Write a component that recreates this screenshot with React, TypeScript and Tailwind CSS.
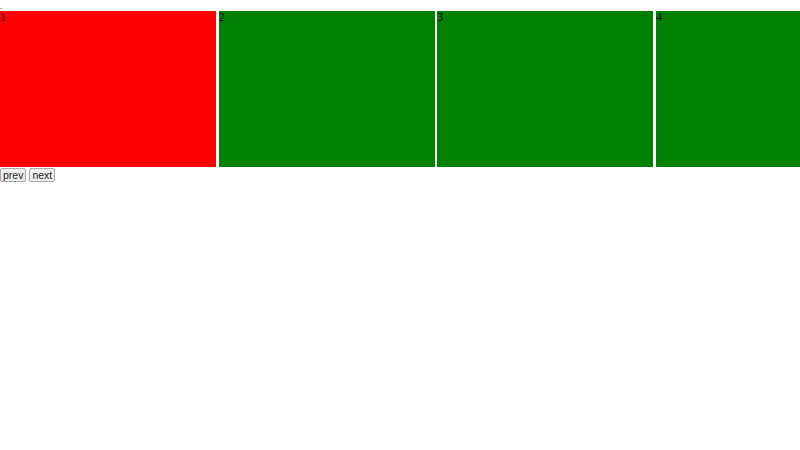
const slides = [
  { n: 1, color: 'bg-[#ff0000]' },
  { n: 2, color: 'bg-[#008000]' },
  { n: 3, color: 'bg-[#008000]' },
  { n: 4, color: 'bg-[#008000]' },
];

export default function App() {
  return (
    <div className="w-[800px] h-[450px] overflow-hidden bg-white text-black font-['Liberation_Serif',serif]">
      <div className="h-[11px] text-[9px] leading-[12px]">.</div>
      {/* slider track */}
      <div className="flex gap-[2.67px] overflow-hidden">
        {slides.map((s) => (
          <div key={s.n} className={`${s.color} w-[216px] h-[156px] shrink-0 text-[12px] leading-[12px]`}>
            {s.n}
          </div>
        ))}
      </div>
      <div className="flex gap-[3px] pt-[1px] font-['Liberation_Sans',sans-serif]">
        <button className="bg-[#efefef] border border-[#a9a9a9] rounded-[2px] px-[2px] text-[10.5px] leading-[12px] text-[#222]">prev</button>
        <button className="bg-[#efefef] border border-[#a9a9a9] rounded-[2px] px-[2px] text-[10.5px] leading-[12px] text-[#222]">next</button>
      </div>
    </div>
  );
}
